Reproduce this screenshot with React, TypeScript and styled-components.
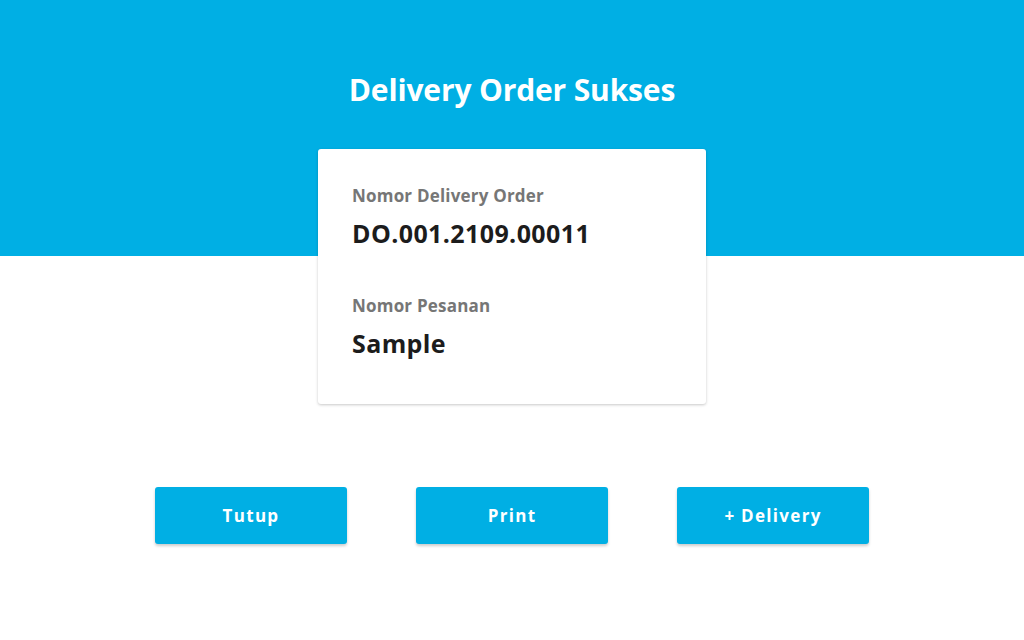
import React, { ReactElement } from 'react';
import styled, { createGlobalStyle } from 'styled-components';

const GlobalStyle = createGlobalStyle`
  html, body {
    margin: 0;
    padding: 0;
    background: #fff;
    font-family: 'Open Sans', 'Noto Sans', sans-serif;
  }
`;

const blue = '#00afe4';

const Page = styled.div`
  width: 1024px;
  min-height: 640px;
  background: linear-gradient(${blue} 256px, #ffffff 256px);
  display: flex;
  flex-direction: column;
  align-items: center;
  padding-top: 72px;
  box-sizing: border-box;
`;

const Title = styled.h1`
  margin: 0 0 41px;
  color: #fff;
  font-size: 30px;
  line-height: 36px;
  font-weight: 700;
  letter-spacing: -0.15px;
`;

const Card = styled.div`
  width: 388px;
  box-sizing: border-box;
  background: #fff;
  border-radius: 3px;
  box-shadow: 0 1px 3px rgba(0, 0, 0, 0.22);
  padding: 36px 34px 45px;
  display: flex;
  flex-direction: column;
`;

const Label = styled.div<{ $gap?: number }>`
  margin-top: ${(p) => p.$gap ?? 0}px;
  color: #767676;
  font-size: 17px;
  line-height: 22px;
  font-weight: 700;
  letter-spacing: 0.2px;
`;

const Value = styled.div`
  margin-top: 10px;
  color: #1c1c1c;
  font-size: 25px;
  line-height: 32px;
  font-weight: 700;
  letter-spacing: 0.4px;
`;

const Actions = styled.div`
  margin-top: 83px;
  display: flex;
  gap: 69px;
`;

const Button = styled.button`
  width: 192px;
  height: 57px;
  border: none;
  border-radius: 3px;
  background: ${blue};
  color: #fff;
  font-family: inherit;
  font-size: 17px;
  font-weight: 700;
  letter-spacing: 1.3px;
  box-shadow: 0 2px 3px rgba(0, 0, 0, 0.2);
  cursor: pointer;
`;

export default function App(): ReactElement {
  return (
    <>
      <GlobalStyle />
      <Page>
        <Title>Delivery Order Sukses</Title>
        <Card>
          <Label>Nomor Delivery Order</Label>
          <Value>DO.001.2109.00011</Value>
          <Label $gap={46}>Nomor Pesanan</Label>
          <Value>Sample</Value>
        </Card>
        <Actions>
          <Button>Tutup</Button>
          <Button>Print</Button>
          <Button>+ Delivery</Button>
        </Actions>
      </Page>
    </>
  );
}
